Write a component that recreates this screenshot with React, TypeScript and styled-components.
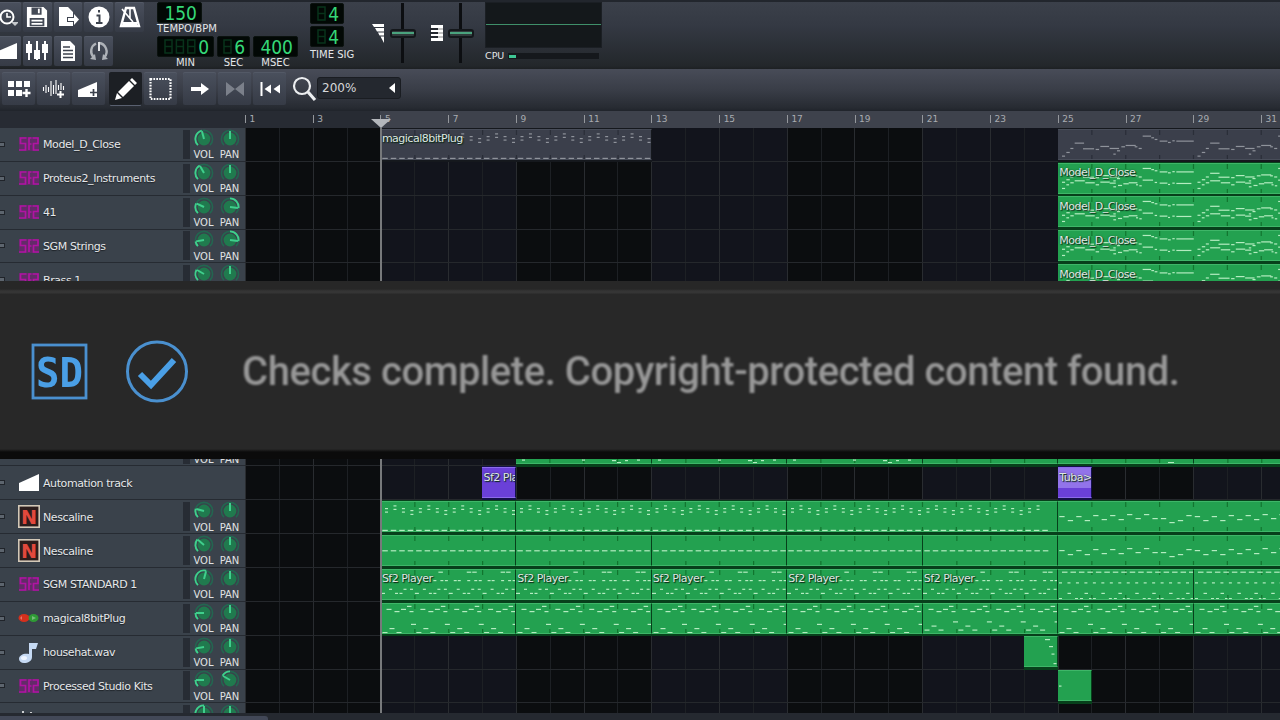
import React from 'react';
import styled, { createGlobalStyle } from 'styled-components';

const BAR = 33.87;
const ROW = 33.85;

const Global = createGlobalStyle`
  * { box-sizing: border-box; }
  body { margin: 0; background: #0b0d0f; overflow: hidden; font-family: 'DejaVu Sans', sans-serif; }
  svg { display: block; flex: none; }
`;

const Window = styled.div`
  position: relative;
  width: 1280px;
  height: 720px;
  overflow: hidden;
  display: flex;
  flex-direction: column;
  background: #23272e;
`;

/* ---------- main toolbar ---------- */

const MainBar = styled.header`
  height: 69px;
  flex: none;
  display: flex;
  align-items: flex-start;
  background: linear-gradient(#3b404a 0, #343943 35%, #23272b 95%, #1d2023);
  border-top: 2px solid #22262d;
`;

const ButtonGrid = styled.div`
  width: 157px;
  display: flex;
  flex-direction: column;
  gap: 4px;
`;

const ButtonLine = styled.div`
  display: flex;
  gap: 2px;
  margin-left: -8px;
`;

const ToolButton = styled.button<{ $size?: number; $active?: boolean }>`
  width: ${p => p.$size ?? 28.8}px;
  height: ${p => p.$size ?? 30}px;
  flex: none;
  padding: 0;
  border: 0;
  border-radius: 2px;
  display: flex;
  align-items: center;
  justify-content: center;
  color: #fff;
  background: ${p => (p.$active ? '#1c1f24' : 'linear-gradient(#4a505d, #363b46)')};
  box-shadow: ${p => (p.$active ? '0 2px 0 -1px #596070' : 'inset 0 1px 0 #535966')};
`;

const Readouts = styled.div`
  width: 153px;
  display: flex;
  flex-direction: column;
`;

const TimeRow = styled.div`
  display: flex;
  gap: 3px;
  margin-top: 2px;
`;

const Readout = styled.div<{ $align?: string }>`
  display: flex;
  flex-direction: column;
  align-items: ${p => p.$align ?? 'center'};
`;

const Lcd = styled.div<{ $w: number }>`
  position: relative;
  width: ${p => p.$w}px;
  height: 21px;
  padding-right: 4px;
  border-radius: 2px;
  background: #020805;
  border: 1px solid #0b120f;
  color: #35d878;
  font-family: 'DejaVu Sans Condensed', 'DejaVu Sans', sans-serif;
  font-size: 19px;
  line-height: 20px;
  text-align: right;
`;

const Ghost = styled.svg`
  position: absolute;
  right: 4px;
  top: 2px;
`;

const Digits = styled.span`
  position: relative;
`;

const Caption = styled.span`
  font: 10px/11px 'DejaVu Sans', sans-serif;
  color: #e4e6e8;
  white-space: nowrap;
`;

const TimeSig = styled.div`
  width: 61px;
  padding-top: 1px;
  display: flex;
  flex-direction: column;
  gap: 2px;
`;

const SliderGroup = styled.div<{ $gap: number }>`
  display: flex;
  align-items: center;
  height: 62px;
  gap: 5px;
  margin-right: ${p => p.$gap}px;
`;

const SliderRail = styled.div`
  width: 25px;
  height: 60px;
  display: flex;
  align-items: center;
  justify-content: center;
  background: linear-gradient(90deg, transparent 10px, #0c0e11 10px, #0c0e11 13px, transparent 13px);
`;

const SliderHandle = styled.div`
  width: 26px;
  height: 9px;
  margin-left: -1px;
  flex: none;
  border-radius: 3px;
  border: 2px solid #14171b;
  background: linear-gradient(#313b3c 1px, #4aa37e 1px, #4aa37e 3px, #313b3c 3px);
`;

const CpuPanel = styled.div`
  width: 117px;
  display: flex;
  flex-direction: column;
  gap: 2px;
`;

const Scope = styled.div`
  height: 46px;
  background: linear-gradient(#14181b 21px, #3f8f6a 21px, #3f8f6a 22.5px, #14181b 22.5px);
  border: 1px solid #1b1f24;
`;

const CpuLine = styled.div`
  display: flex;
  align-items: center;
  gap: 4px;
  font: 9.5px/11px 'DejaVu Sans', sans-serif;
  color: #e4e6e8;
`;

const CpuBar = styled.div`
  width: 91px;
  height: 6px;
  padding: 2px 1px;
  background: #15181c;
  &::before { content: ''; display: block; width: 7px; height: 3px; background: #3fc795; }
`;

/* ---------- editor toolbar ---------- */

const EditBar = styled.div`
  height: 42px;
  flex: none;
  display: flex;
  align-items: flex-start;
  gap: 2px;
  padding: 3px 0 0 2px;
  background: linear-gradient(#484c58 0, #393d47 50%, #272b32 92%, #20242b);
`;

const Spacer = styled.div<{ $w: number }>`
  width: ${p => p.$w}px;
`;

const ZoomBox = styled.div`
  display: flex;
  align-items: center;
  justify-content: space-between;
  width: 84px;
  height: 22px;
  margin: 5px 0 0 -3px;
  padding: 0 5px 0 4px;
  border-radius: 3px;
  background: #24282f;
  border: 1px solid #1a1d22;
  font: 12px 'DejaVu Sans', sans-serif;
  color: #d6d8da;
`;

/* ---------- ruler ---------- */

const Ruler = styled.div`
  position: relative;
  height: 17px;
  flex: none;
  display: flex;
  padding-left: 245px;
  background: linear-gradient(90deg, #272b33 380px, #3e424c 380px);
  overflow: hidden;
`;

const RulerMark = styled.span`
  width: ${BAR * 2}px;
  flex: none;
  height: 8px;
  margin-top: 4px;
  padding-left: 3.5px;
  border-left: 1px solid #94979c;
  font: 9px/9px 'DejaVu Sans', sans-serif;
  color: #a9acb1;
`;

const PlayMarker = styled.svg`
  position: absolute;
  left: 371px;
  top: 7px;
`;

/* ---------- tracks ---------- */

const Editor = styled.div`
  height: 585px;
  flex: none;
  display: flex;
  overflow: hidden;
`;

const TrackList = styled.div`
  width: 245px;
  flex: none;
`;

const TrackHead = styled.div`
  height: ${ROW}px;
  display: flex;
  align-items: center;
  background: #3a424b;
  border-bottom: 1px solid #262b32;
`;

const Grip = styled.div`
  width: 5px;
  height: 5px;
  border: 1px solid #20242a;
  border-left: 0;
  background: #5d656e;
  margin-right: 13px;
`;

const IconSlot = styled.div`
  width: 22px;
  height: 24px;
  display: flex;
  align-items: center;
  justify-content: center;
  margin-right: 3px;
`;

const TrackName = styled.span`
  flex: 1;
  padding-top: 1px;
  font-size: 11px;
  letter-spacing: -0.4px;
  color: #e6e8ea;
  white-space: nowrap;
  text-shadow: 0 1px 1px #1c2025;
`;

const Activity = styled.div`
  width: 7px;
  height: 29px;
  background: #272c34;
`;

const KnobPair = styled.div`
  width: 55px;
  height: 31px;
  padding-right: 2px;
  display: flex;
  justify-content: center;
  gap: 5px;
`;

const KnobCell = styled.div`
  width: 21px;
  display: flex;
  flex-direction: column;
  align-items: center;
`;

const KnobLabel = styled.span`
  margin-top: 2.4px;
  font: 10px/11px 'DejaVu Sans', sans-serif;
  color: #e0e2e4;
`;

/* ---------- arrangement canvas ---------- */

const Canvas = styled.div`
  position: relative;
  flex: 1;
  overflow: hidden;
  display: flex;
`;

const BarColumn = styled.div<{ $alt: boolean; $strong: boolean }>`
  width: ${BAR}px;
  flex: none;
  background: ${p => (p.$alt ? '#12141c' : '#0b0d0f')};
  border-left: 1px solid ${p => (p.$strong ? '#292c30' : '#1d2024')};
`;

const Lanes = styled.div`
  position: absolute;
  inset: 0;
`;

const Lane = styled.div`
  position: relative;
  height: ${ROW}px;
  border-bottom: 1px solid #25282c;
`;

type Tone = 'green' | 'muted' | 'purple';
const toneBg = { green: '#23a150', muted: '#3b3f4b', purple: '#6a40d8' };
const toneEdge = { green: '#3eb668', muted: '#484d59', purple: '#8c6bea' };
const toneUnder = { green: '#07401b', muted: '#15181d', purple: '#14104a' };
const toneNote = { green: '#b4ecc0', muted: '#8f939b', purple: '#fff' };
const toneTick = { green: '#12752f', muted: '#2a2e38', purple: '#6a40d8' };

const ClipBox = styled.div<{ $bar: number; $len: number; $tone: Tone }>`
  position: absolute;
  top: 0.75px;
  left: ${p => (p.$bar - 1) * BAR + 0.4}px;
  width: ${p => p.$len * BAR}px;
  height: 31px;
  overflow: hidden;
  background: ${p => toneBg[p.$tone]};
  border-top: 1px solid ${p => toneEdge[p.$tone]};
  border-bottom: 1px solid ${p => toneEdge[p.$tone]};
  border-right: 1px solid ${p => toneUnder[p.$tone]};
`;

const ClipShade = styled(ClipBox)`
  top: 0;
  height: 34px;
  background: ${p => toneUnder[p.$tone]};
  border: 0;
`;

const ClipLabel = styled.span`
  position: absolute;
  left: 1px;
  top: 2.4px;
  font-size: 11px;
  letter-spacing: -0.5px;
  line-height: 14px;
  white-space: nowrap;
  color: #dfe8e2;
  text-shadow: 1px 1px 1px #0a2a14, 0 0 2px rgba(0, 0, 0, 0.5);
`;

const AutomationLevel = styled.div`
  height: 20px;
  background: #9274ea;
`;

const PlayLine = styled.div`
  position: absolute;
  left: 135px;
  top: 0;
  bottom: 0;
  width: 1.5px;
  background: #77797b;
`;

const ScrollBar = styled.div`
  height: 7px;
  flex: none;
  padding-top: 3px;
  background: #252930;
  &::before { content: ''; display: block; width: 268px; height: 4px; border-radius: 0 3px 0 0; background: #424857; }
`;

/* ---------- notice ---------- */

const Notice = styled.section`
  position: absolute;
  left: 0;
  top: 281px;
  width: 1280px;
  height: 178px;
  display: flex;
  align-items: center;
  padding: 4px 0 0 31px;
  background: linear-gradient(#272727 8px, #353535 10px, #353535 12px, #282828 13px, #282828 168px, #0b0b0b 171px);
`;

const NoticeIcons = styled.svg`
  filter: blur(0.5px);
`;

const NoticeText = styled.p`
  margin: 0 0 0 54px;
  font: 500 40px/48px Roboto, sans-serif;
  letter-spacing: -0.44px;
  color: #989898;
  white-space: nowrap;
  filter: blur(0.8px);
`;

/* ---------- note data: [x, y, width] in pixels inside a clip ---------- */

type Note = [number, number, number];

const perBar = (bars: number, notes: Note[]): Note[] =>
  Array.from({ length: bars }, (_, b) => notes.map(([x, y, w]) => [x + b * BAR, y, w] as Note)).flat();

const Q = BAR / 4;
const dash = (y: number, w = 5.5): Note[] => [0, 1, 2, 3].map(i => [i * Q + 1.3, y, w] as Note);

const arp: Note[] = [
  [4, 6, 3], [4, 9.5, 3], [4 + Q, 3.3, 3], [4 + Q, 6.8, 3],
  [4 + 2 * Q, 6, 3], [4 + 2 * Q, 9.5, 3], [4 + 3 * Q, 8, 3], [4 + 3 * Q, 11.8, 3],
  ...dash(27.8),
];
const drums: Note[] = [
  [18, 1.6, 4.5], [23.5, 1.6, 4.5],
  [5, 10, 3], [9, 10, 3], [18.5, 10, 3], [25.5, 10, 3], [30, 10, 3],
  [8, 18.7, 3], [22.5, 18.7, 3], [29, 18.7, 3], [0, 22.8, 4], [14, 22.8, 3], [18.5, 22.8, 3],
];
const drums2: Note[] = [
  ...[0, 1, 2, 3].map(i => [i * Q + 4, 1.6, 5.5] as Note),
  ...[0, 1, 2, 3].map(i => [i * Q + 1, 12.3, 3] as Note),
  [9.5, 22.8, 3.5], [26.5, 22.8, 3.5], [1, 28, 3], [17, 28, 3], [22, 28, 3], [31, 28, 2.5],
];
const lead: Note[] = [
  [5.5, 4.8, 5], [13.5, 7, 5], [20, 4.8, 5], [26, 1.8, 4.5], [28.5, 7, 4],
  [1.5, 28, 5], [8.5, 24, 5], [15.5, 28, 5], [30, 19.8, 5],
];
const leadLow: Note[] = lead.map(([x, y, w]) => [x, y > 15 ? y - 2.5 : y, w]);

const bassY = [14, 18, 14, 18, 13, 17, 13, 17, 12, 16, 12, 16, 16, 20, 18, 13];
const bass: Note[] = [0, 1].flatMap(r => bassY.map((y, i) => [1.3 + (i + r * 16) * Q, y, 5.3] as Note));

const phrase: [number, number, number][] = [
  [12, 79, 11], [25, 68, 12], [37, 56, 11], [50, 40, 30], [75, 57, 35], [113, 59, 12], [127, 50, 28], [155, 56, 30],
  [166, 73, 9], [177, 63, 11], [190, 51, 13], [203, 47, 32], [230, 51, 10], [242, 56, 11], [254, 19, 27], [280, 24, 10],
  [290, 29, 10], [305, 34, 25], [330, 38, 10], [343, 33, 9], [355, 34, 54],
];
const lower: [number, number, number][] = [
  [12, 74, 11], [25, 63, 10], [37, 57, 12], [50, 51, 32], [82, 57, 30], [113, 63, 12], [127, 55, 30], [155, 58, 20],
  [166, 69, 10], [180, 65, 14], [196, 60, 18], [212, 57, 28], [234, 63, 8], [244, 66, 9], [254, 49, 33],
  [290, 56, 9], [305, 58, 25], [330, 62, 8], [343, 58, 9], [355, 59, 47],
];
const twice = (ns: [number, number, number][]): Note[] =>
  [0, 1].flatMap(r => ns.map(([x, y, w]) => [x / 3 + r * 4 * BAR, y / 3 - 0.8, w / 3 - 0.6] as Note));
const melody = twice(phrase);
const melodyDuo = [
  ...twice(phrase.map(([x, y, w]) => [x, 14 + (y - 19) * 0.69, w] as [number, number, number])),
  ...twice(lower),
];

interface ClipData { bar: number; len: number; tone?: Tone; label?: string; notes?: Note[]; level?: boolean }

function Clip({ bar, len, tone = 'green', label, notes = [], level }: ClipData) {
  return (
    <>
      <ClipShade $bar={bar} $len={len} $tone={tone} />
      <ClipBox $bar={bar} $len={len} $tone={tone}>
        {level && <AutomationLevel />}
        {!level && (
          <svg width={len * BAR} height="30">
            {Array.from({ length: Math.ceil(len) - 1 }, (_, i) => (
              <path key={i} d={`M${(i + 1) * BAR} 0v5M${(i + 1) * BAR} 25v5`} stroke={toneTick[tone]} strokeWidth="1.2" />
            ))}
            {notes.map(([x, y, w], i) => (
              <rect key={i} x={x} y={y} width={w} height="1.2" fill={toneNote[tone]} />
            ))}
          </svg>
        )}
        {label && <ClipLabel>{label}</ClipLabel>}
      </ClipBox>
    </>
  );
}

/* ---------- track data ---------- */

type IconKind = 'sf2' | 'auto' | 'nes' | 'bit' | 'wav' | 'none' | 'bars';
interface TrackData { name?: string; icon: IconKind; vol?: number; pan?: number; clips?: ClipData[]; blank?: boolean; cut?: boolean }

const duo: ClipData[] = [{ bar: 25, len: 8, label: 'Model_D_Close', notes: melodyDuo }];
const fourBars = [5, 9, 13, 17, 21];

const tracks: TrackData[] = [
  { name: 'Model_D_Close', icon: 'sf2', vol: -15, pan: 0, clips: [
    { bar: 5, len: 8, tone: 'muted', label: 'magical8bitPlug', notes: perBar(8, arp).filter(([x, y]) => x > 78 || y > 20) },
    { bar: 25, len: 8, tone: 'muted', notes: melody },
  ] },
  { name: 'Proteus2_Instruments', icon: 'sf2', vol: -30, pan: 0, clips: duo },
  { name: '41', icon: 'sf2', vol: -65, pan: 98, clips: duo },
  { name: 'SGM Strings', icon: 'sf2', vol: -100, pan: 98, clips: duo },
  { name: 'Brass 1', icon: 'sf2', vol: -60, pan: 0, clips: duo },
  { icon: 'none', blank: true },
  { icon: 'none', blank: true },
  { icon: 'none', blank: true },
  { icon: 'none', blank: true },
  { icon: 'none', vol: -60, pan: 0, clips: [9, 13, 17, 21, 25, 29].map((bar, i) => ({
    bar, len: 4, notes: i < 3 ? [[6, 25.5, 3], [66, 25.5, 3], [96, 26, 4], [101, 28, 4], [109, 26, 3], [121, 25.5, 3]] as Note[] : i === 4 ? [[110, 28, 6]] as Note[] : [],
  })) },
  { name: 'Automation track', icon: 'auto', clips: [
    { bar: 8, len: 1, tone: 'purple', label: 'Sf2 Pla' },
    { bar: 25, len: 1, tone: 'purple', label: 'Tuba>', level: true },
  ] },
  { name: 'Nescaline', icon: 'nes', vol: -75, pan: 0, clips: [
    { bar: 5, len: 4, notes: perBar(4, arp) },
    { bar: 9, len: 8, notes: perBar(8, arp) },
    { bar: 17, len: 8, notes: perBar(8, arp).filter(([x, y]) => x < 7.72 * BAR && !(y < 20 && x > 7.5 * BAR)) },
    { bar: 25, len: 8, notes: bass },
  ] },
  { name: 'Nescaline', icon: 'nes', vol: -50, pan: 0, clips: [
    ...fourBars.map(bar => ({ bar, len: 4, notes: perBar(4, dash(14.2)).slice(0, bar === 21 ? 15 : 16) })),
    { bar: 25, len: 8, notes: bass },
  ] },
  { name: 'SGM STANDARD 1', icon: 'sf2', vol: 15, pan: 0, clips: [
    ...fourBars.map(bar => ({ bar, len: 4, label: 'Sf2 Player', notes: perBar(4, drums).filter(([x, y]) => x > 52 || y > 16).slice(0, bar === 21 ? 42 : 52) })),
    { bar: 25, len: 4, notes: perBar(4, drums2) },
    { bar: 29, len: 4, notes: perBar(4, drums2) },
  ] },
  { name: 'magical8bitPlug', icon: 'bit', vol: -90, pan: 0, clips: [
    ...fourBars.map(bar => ({ bar, len: 4, notes: perBar(4, bar === 21 ? leadLow : lead) })),
    { bar: 25, len: 4, notes: perBar(4, lead) },
    { bar: 29, len: 4, notes: perBar(4, lead) },
  ] },
  { name: 'househat.wav', icon: 'wav', vol: -100, pan: 0, clips: [
    { bar: 24, len: 1, notes: [[21, 2, 5], [25, 9, 4], [27.5, 16.5, 3], [29.5, 26, 3]] },
  ] },
  { name: 'Processed Studio Kits', icon: 'sf2', vol: -90, pan: -60, clips: [{ bar: 25, len: 1, notes: [[1, 14.5, 2.5]] }] },
  { icon: 'bars', vol: 0, pan: 0, cut: true },
];

function TrackIcon({ kind }: { kind: IconKind }) {
  switch (kind) {
    case 'sf2':
      return (
        <svg width="20" height="16" viewBox="0 0 20 16">
          <rect x="0" y="1" width="20" height="14" fill="#8c1485" opacity=".5" />
          <path d="M7.500 2H1.500v5.500h5V14H0M10 14V2h2.500M10 8h2.500M13.500 2H19v5.500h-4.500V14H20" fill="none" stroke="#b014a2" strokeWidth="1.700" />
        </svg>
      );
    case 'auto':
      return <svg width="20" height="17" viewBox="0 0 20 17"><path d="M0 9 20 0v17H0z" fill="#fff" /></svg>;
    case 'nes':
      return (
        <svg width="22" height="23" viewBox="0 0 22 23">
          <rect x=".8" y=".8" width="20.4" height="21.4" fill="#2c1d1c" stroke="#d3c9b8" strokeWidth="1.6" />
          <text x="3" y="18.500" textLength="16" lengthAdjust="spacingAndGlyphs" fontFamily="DejaVu Sans" fontWeight="700" fontSize="20" fill="#e2483c">N</text>
        </svg>
      );
    case 'bit':
      return (
        <svg width="22" height="10" viewBox="0 0 22 10">
          <ellipse cx="6" cy="5" rx="5.5" ry="4" fill="#d5301d" />
          <ellipse cx="15.5" cy="5" rx="5" ry="4" fill="#2f9a35" />
          <path d="M2 5l2-2v4zM14 3l4 2-4 2z" fill="#fff" opacity=".35" />
        </svg>
      );
    case 'wav':
      return (
        <svg width="20" height="21" viewBox="0 0 20 21">
          <path d="M10 1h9l-2 6h-4v8c0 4-4 6-8 6-3 0-5-2-5-4 0-4 5-6 10-5z" fill="#c6daf4" />
          <ellipse cx="5" cy="16" rx="3" ry="2" fill="#eef5ff" />
        </svg>
      );
    case 'bars':
      return <svg width="20" height="24" viewBox="0 0 20 24"><path d="M4 3v4M7 5v3M12 4v4" stroke="#fff" strokeWidth="1.5" /></svg>;
    default:
      return null;
  }
}

const polar = (deg: number, r: number) => {
  const a = ((deg - 90) * Math.PI) / 180;
  return [10 + r * Math.cos(a), 10 + r * Math.sin(a)];
};

function Knob({ value, from, label }: { value: number; from: number; label?: string }) {
  const [a, b] = value < from ? [value, from] : [from, value];
  const [x0, y0] = polar(a, 8.6);
  const [x1, y1] = polar(b, 8.6);
  const [px, py] = polar(value, 8);
  const [rx0, ry0] = polar(-135, 8.6);
  const [rx1, ry1] = polar(135, 8.6);
  return (
    <KnobCell>
      <svg width="20" height="18" viewBox="0 0 20 18">
        <circle cx="10" cy="10" r="6.4" fill="#207a4e" />
        <path d={`M${rx0} ${ry0}A8.6 8.6 0 1 1 ${rx1} ${ry1}`} fill="none" stroke="#236650" strokeWidth="1.6" />
        {a !== b && <path d={`M${x0} ${y0}A8.6 8.6 0 0 1 ${x1} ${y1}`} fill="none" stroke="#3fcf8c" strokeWidth="1.9" />}
        <path d={`M10 10L${px} ${py}`} stroke="#3fcf8c" strokeWidth="2" />
      </svg>
      {label && <KnobLabel>{label}</KnobLabel>}
    </KnobCell>
  );
}

function Track({ name, icon, vol, pan = 0, blank, cut }: TrackData) {
  return (
    <TrackHead>
      {!blank && <Grip />}
      <IconSlot><TrackIcon kind={icon} /></IconSlot>
      <TrackName>{name}</TrackName>
      {vol !== undefined && (
        <>
          <Activity />
          <KnobPair>
            <Knob value={vol} from={-135} label={cut ? undefined : 'VOL'} />
            <Knob value={pan} from={0} label={cut ? undefined : 'PAN'} />
          </KnobPair>
        </>
      )}
    </TrackHead>
  );
}

function LcdDisplay({ value, cells, width }: { value: string; cells: number; width: number }) {
  return (
    <Lcd $w={width}>
      <Ghost width={cells * 11.4} height="15">
        {Array.from({ length: cells - value.length }, (_, i) => (
          <path key={i} d={`M${i * 11.4 + 2} 1h7v13h-7zM${i * 11.4 + 2} 7.5h7`} fill="none" stroke="#08331b" strokeWidth="1.5" />
        ))}
      </Ghost>
      <Digits>{value}</Digits>
    </Lcd>
  );
}

const Icon = ({ w = 24, children }: { w?: number; children: React.ReactNode }) => (
  <svg width={w} height={w} viewBox="0 0 24 24" fill="none" stroke="#fff" strokeWidth="2">{children}</svg>
);

function MainToolbar() {
  return (
    <MainBar>
      <ButtonGrid>
        <ButtonLine>
          <ToolButton><Icon><circle cx="13" cy="12" r="6.5" /><path d="M13 8v4h4" strokeWidth="1.6" /><path d="M17 17h8l-4 4z" fill="#c5c8cc" stroke="none" /></Icon></ToolButton>
          <ToolButton><Icon w={22}><path d="M1 1h18l4 4v18H1z" fill="#fff" stroke="none" /><path d="M6 1.500h11v8H6zM4 13h16v9H4z" fill="#444a56" stroke="none" /><path d="M14 3v5M6 16h12M6 19.500h12" /></Icon></ToolButton>
          <ToolButton><Icon><path d="M3 2h9l5 5v5h-6v5h6v4H3z" fill="#fff" stroke="none" /><path d="M12 14.500h7" strokeWidth="3" /><path d="M18 9l5 5.500-5 5.500z" fill="#fff" stroke="none" /></Icon></ToolButton>
          <ToolButton><Icon><circle cx="12" cy="12" r="10.500" fill="#fff" stroke="none" /><path d="M12 5v2.500M9.500 10.500H12.500V18M9 18h6.500" stroke="#3c424d" strokeWidth="2" /></Icon></ToolButton>
          <ToolButton><Icon><path d="M8 3h8l5 18H3z" strokeWidth="2.400" /><path d="M5 17h14v4H4z" fill="#fff" stroke="none" /><path d="M4 4l11 13M12 4v9" strokeWidth="1.600" /></Icon></ToolButton>
        </ButtonLine>
        <ButtonLine>
          <ToolButton><Icon><path d="M2 13L23 4v16H2z" fill="#fff" stroke="none" /></Icon></ToolButton>
          <ToolButton><Icon><path d="M4 2v19M12 2v19M20 2v19" strokeWidth="2" /><path d="M4 5v9M12 11v9M20 5v9" strokeWidth="6" /></Icon></ToolButton>
          <ToolButton><Icon><path d="M5 2h9l5 5v15H5z" fill="#fff" stroke="none" /><path d="M7 8h7M7 11.500h10M7 15h10M7 18.500h10" stroke="#3c424d" strokeWidth="1.300" /></Icon></ToolButton>
          <ToolButton><Icon><path d="M6.500 18A8.500 8.500 0 0 1 9 4.500M12 4A8.500 8.500 0 0 1 17.500 18" stroke="#aeb2b8" strokeWidth="2.400" /><path d="M12 3v9" stroke="#dfe1e4" /><path d="M3 20l6 1-1-6zM21 20l-6 1 1-6z" fill="#aeb2b8" stroke="none" /></Icon></ToolButton>
        </ButtonLine>
      </ButtonGrid>
      <Readouts>
        <Readout $align="flex-start">
          <LcdDisplay value="150" cells={3} width={45} />
          <Caption>TEMPO/BPM</Caption>
        </Readout>
        <TimeRow>
          <Readout><LcdDisplay value="0" cells={4} width={57} /><Caption>MIN</Caption></Readout>
          <Readout><LcdDisplay value="6" cells={2} width={33} /><Caption>SEC</Caption></Readout>
          <Readout><LcdDisplay value="400" cells={3} width={45} /><Caption>MSEC</Caption></Readout>
        </TimeRow>
      </Readouts>
      <TimeSig>
        <LcdDisplay value="4" cells={2} width={34} />
        <LcdDisplay value="4" cells={2} width={34} />
        <Caption>TIME SIG</Caption>
      </TimeSig>
      <SliderGroup $gap={14}>
        <svg width="15" height="20" viewBox="0 0 15 20"><path d="M1 1h12v3H3zM4 5h9v3.500H6zM7 9.500h6v3H8.500zM9.500 13.500H13V20z" fill="#fff" /></svg>
        <SliderRail><SliderHandle /></SliderRail>
      </SliderGroup>
      <SliderGroup $gap={11}>
        <svg width="14" height="18" viewBox="0 0 14 18"><path d="M1 1h12v16H1z" fill="#fff" /><path d="M0 5h8M0 9h8M0 13h8" stroke="#23272e" strokeWidth="2" /><path d="M8 5h5M8 9h5M8 13h5" stroke="#555" strokeWidth=".7" /></svg>
        <SliderRail><SliderHandle /></SliderRail>
      </SliderGroup>
      <CpuPanel>
        <Scope />
        <CpuLine>CPU<CpuBar /></CpuLine>
      </CpuPanel>
    </MainBar>
  );
}

function EditToolbar() {
  return (
    <EditBar>
      <ToolButton $size={33}><Icon><path d="M1 4h6v6H1zM9 4h6v6H9zM17 4h6v6h-6zM1 13h6v6H1zM9 13h6v6H9z" fill="#fff" stroke="none" /><path d="M19.500 12v8M15.500 16h8" strokeWidth="2.400" /></Icon></ToolButton>
      <ToolButton $size={33}><Icon><path d="M1.500 10v4M4 8v8M6.500 10v5M9 4v15M11.500 8v9M14 3v14M16.500 8v5M19 6v7M21.500 9v4" strokeWidth="1.100" /><path d="M18.500 14v7M15 17.500h7" /></Icon></ToolButton>
      <ToolButton $size={33}><Icon><path d="M1 13L20 5v15H1z" fill="#fff" stroke="none" /><path d="M16.500 12v7M13 15.500h7" stroke="#3c424d" strokeWidth="1.700" /></Icon></ToolButton>
      <Spacer $w={0} />
      <ToolButton $size={33} $active><Icon><path d="M4 15L15 4l5 5L9 20z" fill="#fff" stroke="none" /><path d="M16 3l2-2 5 5-2 2zM3 16l5 5-7 2z" fill="#fff" stroke="none" /></Icon></ToolButton>
      <ToolButton $size={33}><Icon><rect x="1.500" y="2" width="20" height="20" strokeDasharray="1.700 1.200" strokeWidth="2.200" /></Icon></ToolButton>
      <Spacer $w={2} />
      <ToolButton $size={33}><Icon><path d="M3 12h11" strokeWidth="4" /><path d="M13 6l8 6-8 6z" fill="#fff" stroke="none" /></Icon></ToolButton>
      <ToolButton $size={33}><Icon><path d="M3 5l9 7-9 7zM21 5l-9 7 9 7z" fill="#7b808a" stroke="none" /></Icon></ToolButton>
      <ToolButton $size={33}><Icon><path d="M3.500 5v14" /><path d="M13 7.500v9L6.500 12zM22 7.500v9L15.500 12z" fill="#fff" stroke="none" /></Icon></ToolButton>
      <Spacer $w={1} />
      <svg width="27" height="33" viewBox="0 0 27 33" fill="none" stroke="#eceef0"><circle cx="11" cy="14" r="8" strokeWidth="2.200" /><path d="M17 20l7 8" strokeWidth="3.200" /></svg>
      <ZoomBox>
        200%
        <svg width="6" height="10" viewBox="0 0 6 10"><path d="M6 0v10L0 5z" fill="#fff" /></svg>
      </ZoomBox>
    </EditBar>
  );
}

export default function App() {
  return (
    <Window>
      <Global />
      <MainToolbar />
      <EditToolbar />
      <Ruler>
        {Array.from({ length: 16 }, (_, i) => <RulerMark key={i}>{i * 2 + 1}</RulerMark>)}
        <PlayMarker width="20" height="10"><path d="M0 1h20l-10 9z" fill="#b3b6bb" /></PlayMarker>
      </Ruler>
      <Editor>
        <TrackList>
          {tracks.map((t, i) => <Track key={i} {...t} />)}
        </TrackList>
        <Canvas>
          {Array.from({ length: 31 }, (_, i) => (
            <BarColumn key={i} $alt={Math.floor(i / 4) % 2 === 1} $strong={i % 2 === 0} />
          ))}
          <Lanes>
            {tracks.map((t, i) => (
              <Lane key={i}>{t.clips?.map((c, j) => <Clip key={j} {...c} />)}</Lane>
            ))}
          </Lanes>
          <PlayLine />
        </Canvas>
      </Editor>
      <ScrollBar />
      <Notice>
        <NoticeIcons width="157" height="64" viewBox="0 0 157 64" fill="none" stroke="#4a9fe6">
          <rect x="2" y="5" width="53" height="53" strokeWidth="2.800" stroke="#4a90cf" />
          <text x="5" y="46.500" textLength="47" lengthAdjust="spacingAndGlyphs" fontFamily="DejaVu Sans Mono" fontWeight="700" fontSize="41" fill="#4a9fe6" stroke="none">SD</text>
          <circle cx="126" cy="31.500" r="29.500" strokeWidth="3" stroke="#4a90cf" />
          <path d="M109 34l11 11 23-25" strokeWidth="6" />
        </NoticeIcons>
        <NoticeText>Checks complete. Copyright-protected content found.</NoticeText>
      </Notice>
    </Window>
  );
}
